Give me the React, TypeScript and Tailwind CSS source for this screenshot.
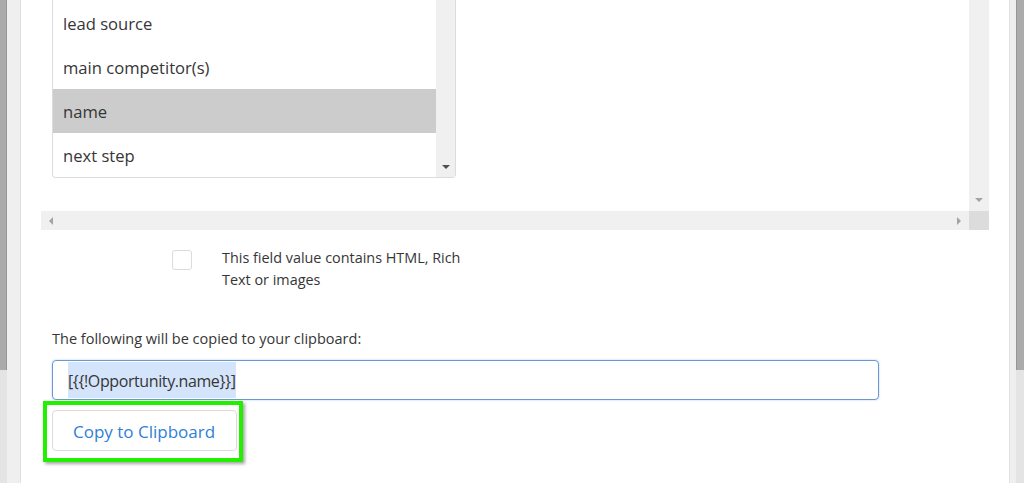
import React from "react";

const FONT = { fontFamily: '"Open Sans", "Noto Sans", sans-serif' };

function Tri({ dir, className }: { dir: "up" | "down" | "left" | "right"; className?: string }) {
    const pts = {
        down: "0,0 8,0 4,4",
        up: "0,4 8,4 4,0",
        left: "4,0 4,8 0,4",
        right: "0,0 0,8 4,4",
    }[dir];
    const vb = dir === "down" || dir === "up" ? "0 0 8 4" : "0 0 4 8";
    const size = dir === "down" || dir === "up" ? "w-[8px] h-[4px]" : "w-[4px] h-[8px]";
    return (
        <svg viewBox={vb} className={`${size} ${className ?? ""}`}>
            <polygon points={pts} fill="currentColor"/>
        </svg>
    );
}

const ITEMS = ["lead source", "main competitor(s)", "name", "next step"];

export default function App() {
    return (
        <div className="flex h-[483px] w-[1024px] overflow-hidden bg-white text-[#363636]" style={FONT}>
            {/* left window edge */}
            <div className="flex w-[21px] shrink-0">
                <div className="flex w-[7px] flex-col">
                    <div className="h-[370px] border-r border-[#979797] bg-[#ababab]"/>
                    <div className="flex-1 bg-[#e4e4e4]"/>
                </div>
                <div className="w-[13px] bg-[#efefef]"/>
                <div className="w-px bg-[#e0e0e0]"/>
            </div>

            {/* panel */}
            <div className="flex-1 px-5">
                {/* scroll area */}
                <div className="flex flex-col">
                    <div className="flex h-[211px]">
                        <div className="flex-1 pl-[11px]">
                            <div className="flex h-[178px] w-[404px] rounded-b-[4px] border-x border-b border-[#dcdcdc]">
                                <ul className="flex-1 pt-px text-[16.6px]">
                                    {ITEMS.map((it) => (
                                        <li
                                            key={it}
                                            className={`flex h-[44px] items-center pl-[10px] pt-[2px] ${it === "name" ? "bg-[#cccccc]" : ""}`}
                                        >
                                            {it}
                                        </li>
                                    ))}
                                </ul>
                                <div className="flex w-[19px] flex-col items-center justify-end bg-[#f0f0f0] pb-[8px]">
                                    <Tri dir="down" className="text-[#505050]"/>
                                </div>
                            </div>
                        </div>
                        <div className="flex w-[20px] flex-col items-center justify-end bg-[#f0f0f0] pb-[9px]">
                            <Tri dir="down" className="text-[#a3a3a3]"/>
                        </div>
                    </div>
                    <div className="flex h-[19px]">
                        <div className="flex flex-1 items-center justify-between bg-[#f0f0f0] px-[8px]">
                            <Tri dir="left" className="text-[#a3a3a3]"/>
                            <Tri dir="right" className="text-[#a3a3a3]"/>
                        </div>
                        <div className="w-[20px] bg-[#dcdcdc]"/>
                    </div>
                </div>

                {/* lower form */}
                <div className="pl-[11px]">
                    <div className="mt-[17px] flex items-start">
                        <div className="ml-[120px] mt-[3px] h-[20px] w-[20px] rounded-[3px] border border-[#dcdcdc] bg-white"/>
                        <p className="ml-[30px] w-[255px] text-[14.4px] leading-[22px]">
                            This field value contains HTML, Rich Text or images
                        </p>
                    </div>

                    <p className="mt-[38px] text-[14.5px] leading-[20px]">
                        The following will be copied to your clipboard:
                    </p>

                    <div className="mt-[11px] flex h-[40px] w-[827px] items-center rounded-[4px] border border-[#6a98d2] pl-[15px] text-[16px] shadow-[0_0_2px_#a8c6ee]">
                        <span className="flex h-[36px] items-center bg-[#d4e4fb] pt-[2px] tracking-[-0.4px]">[{"{{"}!Opportunity.name{"}}"}]</span>
                    </div>

                    <div className="-ml-[9px] mt-px inline-block border-[4px] border-[#22f000] pb-[7px] pl-[5px] pr-[2px] pt-[5px] shadow-[2px_2px_3px_rgba(0,0,0,0.35)]">
                        <button className="flex h-[41px] w-[185px] items-center rounded-[4px] border border-[#dcdcdc] bg-white pl-[20px] pt-[2px] text-[17px] text-[#2f80d6]">
                            Copy to Clipboard
                        </button>
                    </div>
                </div>
            </div>

            {/* right window edge */}
            <div className="flex w-[15px] shrink-0">
                <div className="w-[7px] border-l border-[#e2e2e2] bg-[#efefef]"/>
                <div className="flex w-[8px] flex-col">
                    <div className="h-[370px] border-l border-[#979797] bg-[#ababab]"/>
                    <div className="flex-1 bg-[#e4e4e4]"/>
                </div>
            </div>
        </div>
    );
}
